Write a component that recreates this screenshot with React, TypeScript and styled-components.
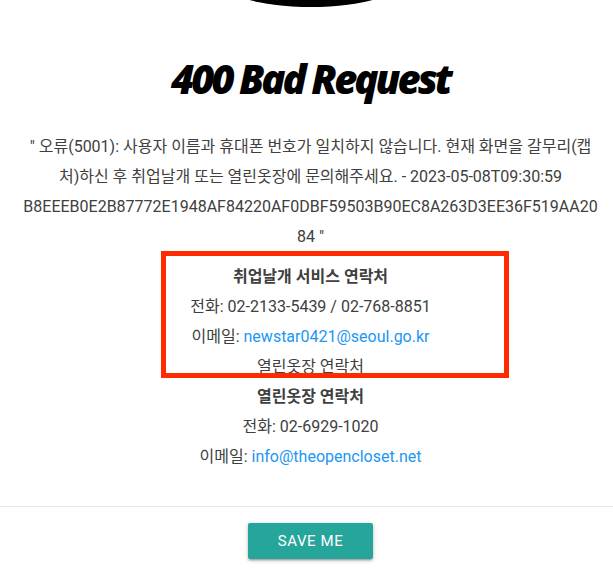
import React from "react";
import styled, { createGlobalStyle } from "styled-components";

const Global = createGlobalStyle`
  html, body { margin: 0; padding: 0; background: #fff; overflow: hidden; }
  body { font-family: Roboto, "Noto Sans CJK KR", sans-serif; color: #404040; }
`;

const Page = styled.main`
  position: relative;
  width: 621px;
  height: 571px;
  overflow: hidden;
  background: #fff;
`;

const Logo = styled.div`
  display: flex;
  justify-content: center;
  height: 8px;
  overflow: hidden;
`;

const Title = styled.h1`
  margin: 46px 0 0;
  height: 50px;
  text-align: center;
  font: italic 800 40px/50px "Open Sans", "Noto Sans", sans-serif;
  letter-spacing: -3px;
  color: #000;
`;

const Body = styled.section`
  margin-top: 28px;
  padding: 0 22px;
  text-align: center;
  font-size: 16px;
  line-height: 30px;
  overflow-wrap: break-word;
`;

const Message = styled.p`
  margin: 0 0 10px;
`;

const Contact = styled.div`
  margin: 0;
`;

const Line = styled.div``;

const Heading = styled(Line)`
  font-weight: 700;
`;

const Mail = styled.a`
  color: #2196f3;
  text-decoration: none;
`;

const Divider = styled.hr`
  position: absolute;
  left: 0;
  right: 0;
  top: 506px;
  margin: 0;
  border: 0;
  border-top: 1px solid #e8e8e8;
`;

const Footer = styled.div`
  position: absolute;
  left: 0;
  right: 0;
  top: 523px;
  display: flex;
  justify-content: center;
`;

const SaveButton = styled.button`
  width: 125px;
  height: 36px;
  border: 0;
  border-radius: 2px;
  background: #26a69a;
  color: #fff;
  font: 400 15px/36px Roboto, sans-serif;
  letter-spacing: 0.6px;
  box-shadow: 0 2px 2px 0 rgba(0,0,0,.14), 0 3px 1px -2px rgba(0,0,0,.12), 0 1px 5px 0 rgba(0,0,0,.2);
  padding: 0;
`;

const Highlight = styled.div`
  position: absolute;
  left: 161px;
  top: 251px;
  width: 348px;
  height: 127px;
  box-sizing: border-box;
  border: 5px solid #ff2a00;
  pointer-events: none;
`;

export default function App() {
  return (
    <Page>
      <Global />
      <Logo>
        <svg width="200" height="8" viewBox="0 0 200 8" aria-hidden="true">
          <ellipse cx="100" cy="-23" rx="96" ry="30" fill="#000" />
        </svg>
      </Logo>
      <Title>400 Bad Request</Title>
      <Body>
        <Message>
          " 오류(5001): 사용자 이름과 휴대폰 번호가 일치하지 않습니다. 현재 화면을 갈무리(캡처)하신 후 취업날개 또는 열린옷장에 문의해주세요. - 2023-05-08T09:30:59 B8EEEB0E2B87772E1948AF84220AF0DBF59503B90EC8A263D3EE36F519AA2084 "
        </Message>
        <Contact>
          <Heading>취업날개 서비스 연락처</Heading>
          <Line>전화: 02-2133-5439 / 02-768-8851</Line>
          <Line>이메일: <Mail href="#">newstar0421@seoul.go.kr</Mail></Line>
          <Line>열린옷장 연락처</Line>
        </Contact>
        <Contact>
          <Heading>열린옷장 연락처</Heading>
          <Line>전화: 02-6929-1020</Line>
          <Line>이메일: <Mail href="#">info@theopencloset.net</Mail></Line>
        </Contact>
      </Body>
      <Divider />
      <Footer>
        <SaveButton>SAVE ME</SaveButton>
      </Footer>
      <Highlight />
    </Page>
  );
}
